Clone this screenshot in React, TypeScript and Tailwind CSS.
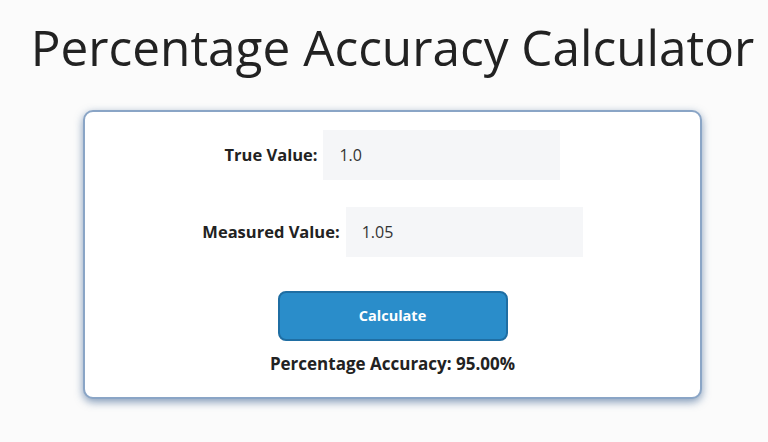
import { useState } from 'react';

function Field({ label, value }: { label: string; value: string }) {
  return (
    <div className="flex items-center justify-center gap-[6px]">
      <label className="text-[16.5px] font-bold text-[#222]">{label}</label>
      <input
        className="h-[50px] w-[237px] bg-[#f5f6f8] px-[16px] text-[16px] text-[#333] outline-none"
        defaultValue={value}
      />
    </div>
  );
}

export default function App() {
  const [result] = useState('95.00%');

  return (
    <div
      className="flex min-h-[442px] flex-col items-center bg-[#fbfbfb] pl-[17px] pt-[14px]"
      style={{ fontFamily: '"Open Sans", "Noto Sans", sans-serif' }}
    >
      <h1 className="text-[49.5px] font-normal leading-[66px] text-[#222]">Percentage Accuracy Calculator</h1>
      <div className="mt-[30px] flex w-[619px] flex-col items-center rounded-[10px] border-2 border-[#8aa5c6] bg-white pb-[20px] pt-[18px] shadow-[0_3px_9px_rgba(50,90,140,0.6)]">
        <Field label="True Value:" value="1.0" />
        <div className="h-[27px]" />
        <Field label="Measured Value:" value="1.05" />
        <button className="mt-[34px] h-[50px] w-[230px] rounded-[8px] border-2 border-[#1f6ea3] bg-[#2a8dca] text-[14.5px] font-bold text-white">
          Calculate
        </button>
        <p className="mt-[10px] text-[17px] font-bold text-[#222]">Percentage Accuracy: {result}</p>
      </div>
    </div>
  );
}
